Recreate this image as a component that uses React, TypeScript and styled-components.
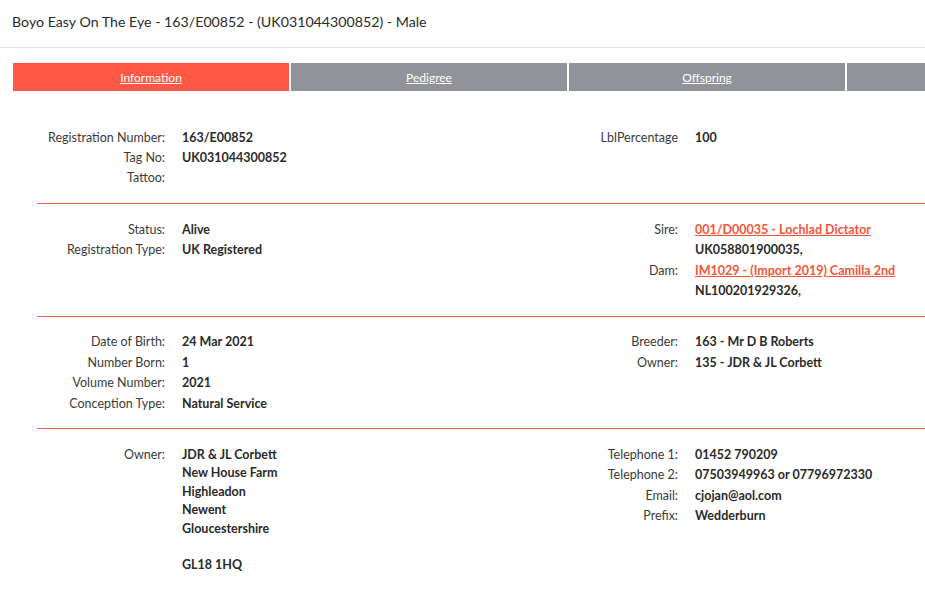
import styled, { createGlobalStyle } from "styled-components";

const GlobalStyle = createGlobalStyle`
  html, body {
    margin: 0;
    padding: 0;
    background: #fff;
    overflow: hidden;
  }
  body {
    font-family: "Lato", "Open Sans", sans-serif;
    color: #333;
  }
`;

type Field = {
  label: string;
  value?: string;
  lines?: string[];
  link?: string;
};

type Block = { left: Field[]; right: Field[] };

const animal = {
  title: "Boyo Easy On The Eye - 163/E00852 - (UK031044300852) - Male",
};

const tabs = ["Information", "Pedigree", "Offspring", ""];

const blocks: Block[] = [
  {
    left: [
      { label: "Registration Number:", value: "163/E00852" },
      { label: "Tag No:", value: "UK031044300852" },
      { label: "Tattoo:", value: "" },
    ],
    right: [{ label: "LblPercentage", value: "100" }],
  },
  {
    left: [
      { label: "Status:", value: "Alive" },
      { label: "Registration Type:", value: "UK Registered" },
    ],
    right: [
      { label: "Sire:", link: "001/D00035 - Lochlad Dictator" },
      { label: "", value: "UK058801900035," },
      { label: "Dam:", link: "IM1029 - (Import 2019) Camilla 2nd" },
      { label: "", value: "NL100201929326," },
    ],
  },
  {
    left: [
      { label: "Date of Birth:", value: "24 Mar 2021" },
      { label: "Number Born:", value: "1" },
      { label: "Volume Number:", value: "2021" },
      { label: "Conception Type:", value: "Natural Service" },
    ],
    right: [
      { label: "Breeder:", value: "163 - Mr D B Roberts" },
      { label: "Owner:", value: "135 - JDR & JL Corbett" },
    ],
  },
  {
    left: [
      {
        label: "Owner:",
        lines: ["JDR & JL Corbett", "New House Farm", "Highleadon", "Newent", "Gloucestershire", "", "GL18 1HQ"],
      },
    ],
    right: [
      { label: "Telephone 1:", value: "01452 790209" },
      { label: "Telephone 2:", value: "07503949963 or 07796972330" },
      { label: "Email:", value: "cjojan@aol.com" },
      { label: "Prefix:", value: "Wedderburn" },
    ],
  },
];

const FieldList = ({ fields, labelWidth }: { fields: Field[]; labelWidth: number }) => (
  <Fields $labelWidth={labelWidth}>
    {fields.map((f, i) => (
      <Row key={i}>
        <Label>{f.label}</Label>
        <Value>
          {f.link !== undefined && <LinkText href="#">{f.link}</LinkText>}
          {f.lines && f.lines.map((l, j) => <Line key={j}>{l || "\u00a0"}</Line>)}
          {f.value || "\u00a0"}
        </Value>
      </Row>
    ))}
  </Fields>
);

export default function App() {
  return (
    <Page>
      <GlobalStyle />
      <Header>{animal.title}</Header>
      <TabBar>
        {tabs.map((t, i) => (
          <Tab key={i} $active={i === 0}>
            {t && <TabLink href="#">{t}</TabLink>}
          </Tab>
        ))}
      </TabBar>
      <Details>
        {blocks.map((b, i) => (
          <Section key={i} $last={i === blocks.length - 1}>
            <FieldList fields={b.left} labelWidth={128} />
            <FieldList fields={b.right} labelWidth={249} />
          </Section>
        ))}
      </Details>
    </Page>
  );
}

const Page = styled.div`
  width: 925px;
  height: 591px;
  overflow: hidden;
`;

const Header = styled.div`
  height: 48px;
  box-sizing: border-box;
  padding: 13px 12px 0;
  font-size: 14.2px;
  line-height: 18px;
  color: #2b2b2b;
  border-bottom: 1px solid #dfe4ea;
  margin-bottom: 15px;
`;

const TabBar = styled.div`
  display: flex;
  gap: 2px;
  padding-left: 13px;
  width: max-content;
`;

const Tab = styled.div<{ $active?: boolean }>`
  flex: 0 0 276px;
  height: 28px;
  display: flex;
  align-items: center;
  justify-content: center;
  background: ${(p) => (p.$active ? "#ff5844" : "#929398")};
`;

const TabLink = styled.a`
  color: #fff;
  font-size: 12px;
  text-decoration: underline;
`;

const Details = styled.div`
  margin: 21px 0 0 37px;
`;

const Section = styled.div<{ $last?: boolean }>`
  display: grid;
  grid-template-columns: 392px 1fr;
  padding: 16.5px 0 15.5px;
  border-bottom: ${(p) => (p.$last ? "none" : "1px solid #f26049")};
`;

const Fields = styled.div<{ $labelWidth: number }>`
  display: grid;
  grid-template-columns: ${(p) => p.$labelWidth}px 1fr;
  column-gap: 17px;
  row-gap: 2px;
  align-content: start;
`;

const Row = styled.div`
  display: contents;
`;

const Label = styled.div`
  text-align: right;
  font-size: 12.5px;
  line-height: 18.4px;
  color: #3a3a3a;
`;

const Value = styled.div`
  font-size: 12.5px;
  line-height: 18.4px;
  font-weight: 700;
  color: #2a2a2a;
  white-space: nowrap;
`;

const Line = styled.div``;

const LinkText = styled.a`
  color: #f4543c;
  text-decoration: underline;
`;
